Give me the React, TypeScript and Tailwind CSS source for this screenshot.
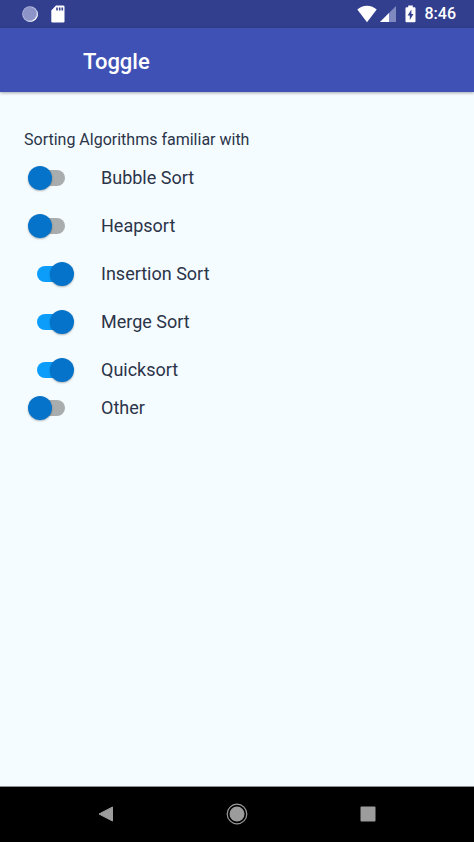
import { useState } from 'react';

const initialSorts = [
  { id: 'bubble', label: 'Bubble Sort', on: false },
  { id: 'heap', label: 'Heapsort', on: false },
  { id: 'insertion', label: 'Insertion Sort', on: true },
  { id: 'merge', label: 'Merge Sort', on: true },
  { id: 'quick', label: 'Quicksort', on: true },
];

function StatusBar() {
  return (
    <div className="flex h-7 items-center justify-between bg-[#323f8e] pl-[21px] pr-[18px] text-white">
      <div className="flex items-center gap-3">
        <svg width="18" height="18" viewBox="0 0 18 18" aria-hidden="true">
          <circle cx="9" cy="9" r="7.8" fill="#b9bfe2" />
          <circle cx="8.700" cy="8.700" r="6.800" fill="#8c94c8" />
          <path d="M15.400 4.600A7.800 7.800 0 0 1 5.500 16A8.200 8.200 0 0 0 15.400 4.600Z" fill="#fff" />
        </svg>
        <svg width="14" height="18" viewBox="0 0 14 18" aria-hidden="true">
          <path d="M5 .5h7.2a1.300 1.300 0 0 1 1.300 1.300v14.400a1.300 1.300 0 0 1-1.300 1.300H1.600A1.300 1.300 0 0 1 .3 16.200V5.400Z" fill="#fff" />
          <path d="M5.200 2.400h1.600v3.200H5.200zM7.900 2.400h1.600v3.200H7.900zM10.500 2.400h1.600v3.200h-1.600z" fill="#323f8e" />
        </svg>
      </div>
      <div className="flex items-center">
        <svg width="20" height="18" viewBox="0 0 20 18" aria-hidden="true">
          <path d="M10 17.200L.3 4.500C3 2 6.200.7 10 .7s7 1.300 9.700 3.800Z" fill="#fff" />
        </svg>
        <svg className="ml-[3px]" width="16" height="16" viewBox="0 0 16 16" aria-hidden="true">
          <path d="M0 16L16 0v16Z" fill="#8089bf" />
          <path d="M0 16L9 7v9Z" fill="#fff" />
        </svg>
        <svg className="ml-[9px]" width="11" height="18" viewBox="0 0 11 18" aria-hidden="true">
          <path d="M3.200.6h4.600v1.700h1.700a1 1 0 0 1 1 1v13a1 1 0 0 1-1 1h-8a1 1 0 0 1-1-1v-13a1 1 0 0 1 1-1h1.700Z" fill="#fff" />
          <path d="M6.400 4.600L2.600 10.500h2.200v4.500l3.700-6H6.400Z" fill="#323f8e" />
        </svg>
        <span className="ml-[9px] text-base font-medium">8:46</span>
      </div>
    </div>
  );
}

type SwitchRowProps = {
  id: string;
  label: string;
  on: boolean;
  onToggle: () => void;
  className: string;
};

function SwitchRow({ id, label, on, onToggle, className }: SwitchRowProps) {
  return (
    <div className={`flex items-center ${className}`}>
      <span className="relative flex h-6 w-[46px] items-center px-[9px]">
        <input
          id={id}
          type="checkbox"
          role="switch"
          checked={on}
          onChange={onToggle}
          className="peer h-4 w-full appearance-none rounded-full bg-[#a9adad] checked:bg-[#0c9dfb]"
        />
        <span className="pointer-events-none absolute left-0 top-0 size-6 rounded-full bg-[#0473c9] shadow-[0_1px_2px_rgba(0,0,0,0.3)] peer-checked:left-auto peer-checked:right-0" />
      </span>
      <label htmlFor={id} className="pl-[27px] text-lg leading-6">
        {label}
      </label>
    </div>
  );
}

function NavBar() {
  return (
    <nav className="flex h-14 items-center justify-around border-t border-[#8c9092] bg-black px-10 pb-[2px] text-[#9c9c9c]">
      <button aria-label="Back" className="flex w-6 justify-center">
        <svg width="16" height="16" viewBox="0 0 16 16">
          <path d="M14.500 1v14L1 8Z" fill="currentColor" stroke="currentColor" strokeLinejoin="round" />
        </svg>
      </button>
      <button aria-label="Home" className="flex w-6 justify-center">
        <svg width="22" height="22" viewBox="0 0 22 22">
          <circle cx="11" cy="11" r="9.800" fill="none" stroke="currentColor" strokeWidth="1.200" />
          <circle cx="11" cy="11" r="7.500" fill="currentColor" />
        </svg>
      </button>
      <button aria-label="Recent apps" className="flex w-6 justify-center">
        <svg width="16" height="16" viewBox="0 0 16 16">
          <rect x=".5" y=".5" width="15" height="15" rx="1" fill="currentColor" />
        </svg>
      </button>
    </nav>
  );
}

export default function App() {
  const [sorts, setSorts] = useState(initialSorts);
  const [other, setOther] = useState(false);

  const toggle = (id: string) => {
    setSorts(sorts.map(s => (s.id === id ? { ...s, on: !s.on } : s)));
  };

  return (
    <div className="flex min-h-screen flex-col bg-[#f5fcff] font-[Roboto,sans-serif] text-[#2b3449]">
      <StatusBar />
      <header className="flex h-16 items-center bg-[#3f51b5] px-[83px] pt-1 shadow-[0_1px_3px_rgba(0,0,0,0.35)]">
        <h1 className="text-[22px] font-medium leading-7 text-white">Toggle</h1>
      </header>

      <main className="flex-1 px-6 pt-9">
        <fieldset>
          <legend className="text-base leading-6">Sorting Algorithms familiar with</legend>
          <div className="pl-1 pt-[2px]">
            {sorts.map(s => (
              <SwitchRow
                key={s.id}
                id={s.id}
                label={s.label}
                on={s.on}
                onToggle={() => toggle(s.id)}
                className="h-12"
              />
            ))}
            <SwitchRow
              id="other"
              label="Other"
              on={other}
              onToggle={() => setOther(!other)}
              className="h-7"
            />
          </div>
        </fieldset>
      </main>

      <NavBar />
    </div>
  );
}
